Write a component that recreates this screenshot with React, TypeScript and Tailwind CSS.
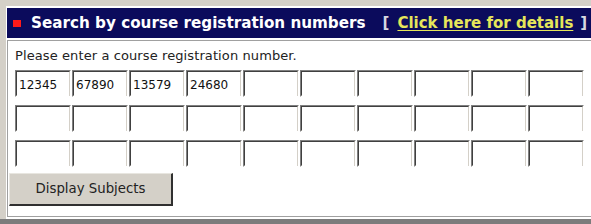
import React from "react";

const values = ["12345", "67890", "13579", "24680"];

function Cell({ v }: { v?: string }) {
  return (
    <div className="w-[56px] h-[27px] border-t border-l border-t-[#808080] border-l-[#808080] border-b border-r border-b-[#ffffff] border-r-[#ffffff]">
      <div className="w-full h-full border-t border-l border-t-[#404040] border-l-[#404040] border-b border-r border-b-[#d4d0c8] border-r-[#d4d0c8] bg-white">
        <input
          defaultValue={v ?? ""}
          className="w-full h-full bg-white outline-none px-[2px] text-[12px] text-[#111] leading-none"
          style={{ fontFamily: '"DejaVu Sans", Verdana, sans-serif' }}
        />
      </div>
    </div>
  );
}

export default function App() {
  const rows = [0, 1, 2];
  return (
    <div
      className="w-[591px] h-[224px] bg-[#d4d0c8] overflow-hidden flex flex-col"
      style={{ fontFamily: '"DejaVu Sans", Verdana, sans-serif' }}
    >
      <div className="pt-[6px] pl-[6px] flex-1 flex flex-col">
        <div className="bg-white pt-[2px] pl-[1px] flex-1 flex flex-col">
          <div className="h-[30px] bg-[#0b0b5c] flex items-center">
            <div className="ml-[6px] w-[8px] h-[7px] bg-[#ff1a1a]" />
            <div className="ml-[10px] text-white font-bold text-[15.2px] whitespace-nowrap">
              Search by course registration numbers
            </div>
            <div className="ml-[17px] text-[#d8d8e0] font-bold text-[15px] whitespace-nowrap flex items-center">
              <span>[</span>
              <span className="ml-[8px] text-[#e6e65a] underline underline-offset-2">Click here for details</span>
              <span className="ml-[7px]">]</span>
            </div>
          </div>
          <div className="mt-[2px] flex-1 border-t border-l border-[#a0a0a0] border-b border-b-[#a0a0a0] pl-[7px] pt-[7px] flex flex-col">
            <div className="text-[13px] text-[#222] leading-[16px] tracking-[0.1px]">
              Please enter a course registration number.
            </div>
            <div className="mt-[6px] flex flex-col gap-[8px]">
              {rows.map((r) => (
                <div key={r} className="flex gap-[1px]">
                  {Array.from({ length: 10 }).map((_, i) => (
                    <Cell key={i} v={r === 0 ? values[i] : undefined} />
                  ))}
                </div>
              ))}
            </div>
            <div className="mt-[6px] -ml-[6px]">
              <button className="w-[164px] h-[33px] bg-[#d4d0c8] border-t border-l border-t-[#e8e6e0] border-l-[#e8e6e0] border-b-2 border-r-2 border-b-[#303030] border-r-[#303030] text-[13.3px] text-[#222]">
                Display Subjects
              </button>
            </div>
          </div>
          <div className="h-[2px] bg-white" />
        </div>
      </div>
      <div className="h-[5px] bg-[#7c7c7c]" />
    </div>
  );
}
